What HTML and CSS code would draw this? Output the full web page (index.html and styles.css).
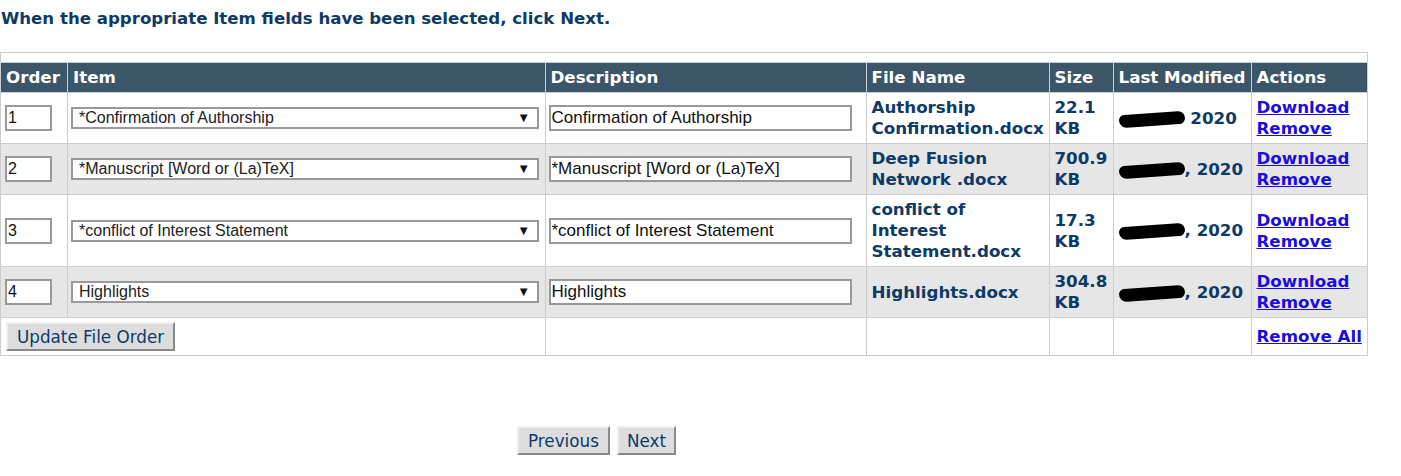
FILE: index.html
```html
<!DOCTYPE html>
<html>
<head>
<meta charset="utf-8">
<link rel="stylesheet" href="styles.css">
</head>
<body>
<div class="intro">When the appropriate Item fields have been selected, click Next.</div>
<table class="files">
  <colgroup>
    <col class="c-order"><col class="c-item"><col class="c-desc"><col class="c-name"><col class="c-size"><col class="c-mod"><col class="c-act">
  </colgroup>
  <tr class="spacer"><td colspan="7"></td></tr>
  <tr class="head">
    <th>Order</th><th>Item</th><th>Description</th><th>File Name</th><th>Size</th><th>Last Modified</th><th>Actions</th>
  </tr>
  <tr>
    <td class="in"><input class="ord" type="text" value="1"></td>
    <td class="in"><div class="sel"><span>*Confirmation of Authorship</span><span class="arr">▼</span></div></td>
    <td class="in d"><input class="desc" type="text" value="Confirmation of Authorship"></td>
    <td class="b">Authorship Confirmation.docx</td>
    <td class="b">22.1 KB</td>
    <td class="b mod"><span class="blot"></span> 2020</td>
    <td class="act"><a href="#">Download</a><br><a href="#">Remove</a></td>
  </tr>
  <tr class="alt">
    <td class="in"><input class="ord" type="text" value="2"></td>
    <td class="in"><div class="sel"><span>*Manuscript [Word or (La)TeX]</span><span class="arr">▼</span></div></td>
    <td class="in d"><input class="desc" type="text" value="*Manuscript [Word or (La)TeX]"></td>
    <td class="b">Deep Fusion Network .docx</td>
    <td class="b">700.9 KB</td>
    <td class="b mod"><span class="blot"></span>, 2020</td>
    <td class="act"><a href="#">Download</a><br><a href="#">Remove</a></td>
  </tr>
  <tr>
    <td class="in"><input class="ord" type="text" value="3"></td>
    <td class="in"><div class="sel"><span>*conflict of Interest Statement</span><span class="arr">▼</span></div></td>
    <td class="in d"><input class="desc" type="text" value="*conflict of Interest Statement"></td>
    <td class="b">conflict of Interest Statement.docx</td>
    <td class="b">17.3 KB</td>
    <td class="b mod"><span class="blot"></span>, 2020</td>
    <td class="act"><a href="#">Download</a><br><a href="#">Remove</a></td>
  </tr>
  <tr class="alt">
    <td class="in"><input class="ord" type="text" value="4"></td>
    <td class="in"><div class="sel"><span>Highlights</span><span class="arr">▼</span></div></td>
    <td class="in d"><input class="desc" type="text" value="Highlights"></td>
    <td class="b">Highlights.docx</td>
    <td class="b">304.8 KB</td>
    <td class="b mod"><span class="blot"></span>, 2020</td>
    <td class="act"><a href="#">Download</a><br><a href="#">Remove</a></td>
  </tr>
  <tr class="foot">
    <td colspan="2" class="in"><button class="btn">Update File Order</button></td>
    <td></td><td></td><td></td><td></td>
    <td class="act"><a href="#">Remove All</a></td>
  </tr>
</table>
<div class="nav">
  <button class="btn nb">Previous</button>
  <button class="btn nb">Next</button>
</div>
</body>
</html>
```

FILE: styles.css
```css
html, body {
  margin: 0;
  padding: 0;
  background: #ffffff;
}
body {
  font-family: Verdana, "DejaVu Sans", sans-serif;
  color: #0d3a66;
}
.intro {
  font-size: 16.6px;
  font-weight: bold;
  padding: 9px 0 0 1px;
  height: 52px;
  box-sizing: border-box;
  line-height: 20px;
}
.files {
  border-collapse: collapse;
  table-layout: fixed;
  width: 1367px;
  border: 1px solid #cccccc;
  font-size: 16.7px;
}
.c-order { width: 67px; }
.c-item { width: 477.5px; }
.c-desc { width: 321px; }
.c-name { width: 183px; }
.c-size { width: 64px; }
.c-mod { width: 138px; }
.c-act { width: 116.5px; }
.files td, .files th {
  border: 1px solid #cccccc;
  padding: 4px 5px;
  line-height: 21px;
  vertical-align: middle;
  text-align: left;
}
.files td.in {
  padding-left: 4px;
}
.files td.d {
  padding-left: 3px;
}
.files td.act {
  white-space: nowrap;
  padding-right: 0;
}
.spacer td {
  height: 9px;
  padding: 0 !important;
  line-height: 0 !important;
  border-left: 0;
  border-right: 0;
}
.head th {
  background: #3b5569;
  color: #ffffff;
  font-weight: bold;
  height: 20px;
  border-color: #c8d0d6;
  border-top-color: #cccccc;
}
.alt td {
  background: #e6e6e6;
}
.b {
  font-weight: bold;
}
.mod {
  white-space: nowrap;
}
.blot {
  display: inline-block;
  width: 66px;
  height: 13px;
  background: #000000;
  border-radius: 6px 9px 7px 10px;
  vertical-align: -2px;
  transform: skewY(-4deg);
}
.act a {
  color: #1a0dde;
  font-weight: bold;
  text-decoration: underline;
}
input.ord, input.desc {
  font-family: Arial, "Liberation Sans", sans-serif;
  font-size: 17px;
  color: #111111;
  border: 2px solid #999999;
  background: #ffffff;
  padding: 0 0 0 1px;
  margin: 0;
  height: 26px;
  box-sizing: border-box;
  display: block;
}
input.ord {
  font-size: 16px;
  width: 47px;
}
input.desc {
  width: 303px;
}
.sel {
  font-family: Arial, "Liberation Sans", sans-serif;
  font-size: 16px;
  color: #222222;
  border: 2px solid #999999;
  background: #ffffff;
  height: 22px;
  box-sizing: border-box;
  width: 468px;
  margin-left: -1px;
  display: flex;
  align-items: center;
  justify-content: space-between;
  padding: 0 7px 0 6px;
  line-height: 18px;
}
.sel .arr {
  font-size: 13px;
  color: #111111;
}
.btn {
  font-family: Verdana, "DejaVu Sans", sans-serif;
  font-size: 16.8px;
  color: #0d3a66;
  background: #dddddd;
  border: 2px solid;
  border-color: #eeeeee #888888 #888888 #eeeeee;
  padding: 0 9px;
  height: 29px;
  margin: 0 0 0 1px;
  cursor: pointer;
}
.nav {
  padding: 70px 0 0 517px;
  display: flex;
  gap: 7px;
}
.nav .btn {
  margin: 0;
}
.nav .btn + .btn {
  padding: 0 8px;
}
```
